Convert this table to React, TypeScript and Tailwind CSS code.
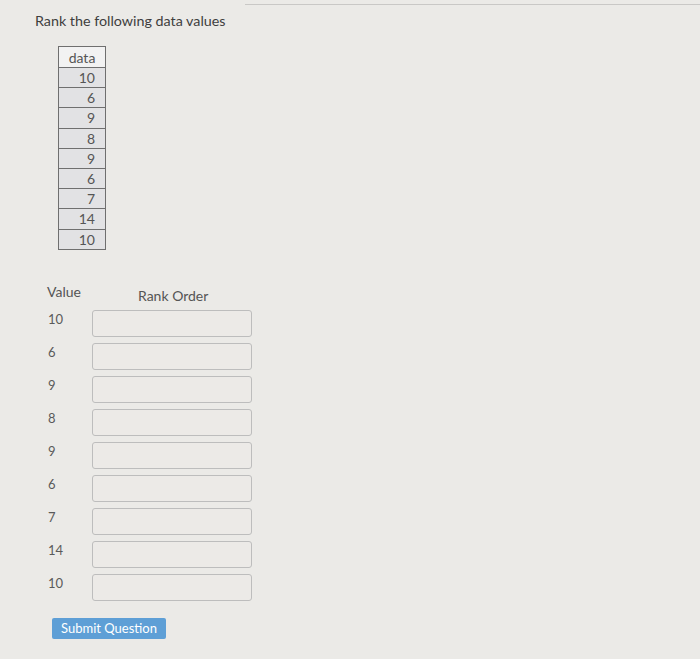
const data = [10, 6, 9, 8, 9, 6, 7, 14, 10];

export default function App() {
  return (
    <div
      className="w-[700px] h-[659px] overflow-hidden bg-[#ebeae7] text-[#4a4a4a]"
      style={{ fontFamily: "Lato, 'Open Sans', sans-serif" }}
    >
      <div className="ml-[245px] h-px bg-[#c9c8c6] mt-[4px]" />
      <div className="pl-[35px] pt-[6px]">
        <h1 className="text-[14.3px] leading-[19px] text-[#3e3e3e]">Rank the following data values</h1>

        <table className="ml-[23px] mt-[16px] border-collapse text-[14px] leading-[19px]">
          <thead>
            <tr>
              <th className="w-[47px] h-[21px] border border-[#6f6f6f] bg-[#f2f2f2] font-normal text-center text-[#555]">
                data
              </th>
            </tr>
          </thead>
          <tbody>
            {data.map((v, i) => (
              <tr key={i}>
                <td className="h-[20.2px] border border-[#6f6f6f] bg-[#e2e2e4] text-right pr-[10px] text-[#555]">
                  {v}
                </td>
              </tr>
            ))}
          </tbody>
        </table>

        <div className="mt-[32px] flex items-end text-[14px] text-[#555]">
          <div className="w-[103px] pl-[12px] -translate-y-[1px]">Value</div>
          <div className="translate-y-[3px]">Rank Order</div>
        </div>

        <div className="mt-[7px] flex flex-col gap-[6px]">
          {data.map((v, i) => (
            <div key={i} className="flex items-center h-[27px]">
              <div className="w-[57px] pl-[13px] text-[13px] text-[#5a5a5a] -translate-y-[3px]">{v}</div>
              <div className="w-[160px] h-[27px] rounded-[3px] border border-[#bdbdbd] bg-[#eceae7]" />
            </div>
          ))}
        </div>

        <button className="mt-[17px] ml-[17px] w-[114px] h-[21px] rounded-[2px] bg-[#5e9fd6] text-white text-[13px] leading-[21px]">
          Submit Question
        </button>
      </div>
    </div>
  );
}
